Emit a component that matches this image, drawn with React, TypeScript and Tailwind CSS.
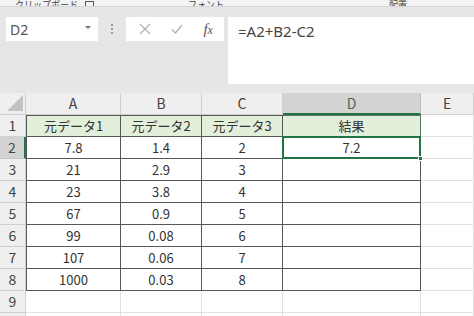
import { ReactNode } from "react";

const cols = ["A", "B", "C", "D", "E"];
const widths = "grid-cols-[26px_95px_81px_81px_138px_53px]";

const rows: string[][] = [
  ["元データ1", "元データ2", "元データ3", "結果"],
  ["7.8", "1.4", "2", "7.2"],
  ["21", "2.9", "3", ""],
  ["23", "3.8", "4", ""],
  ["67", "0.9", "5", ""],
  ["99", "0.08", "6", ""],
  ["107", "0.06", "7", ""],
  ["1000", "0.03", "8", ""],
];

const font = { fontFamily: '"Noto Sans CJK JP", "Noto Sans", sans-serif' };

const Cell = ({ className, children }: { className: string; children?: ReactNode }) => (
  <div className={"h-[22px] flex items-center justify-center text-[13px] text-[#333] " + className}>{children}</div>
);

export default function App() {
  return (
    <div className="w-[474px] h-[316px] overflow-hidden bg-white" style={font}>
      {/* ribbon group labels, cut off at the top */}
      <div className="h-[7px] overflow-hidden bg-[#f3f3f3] border-b border-[#d6d6d6] flex items-end text-[9px] text-[#444] leading-[10px]">
        <span className="ml-[15px] -mb-[4px]">クリップボード</span>
        <span className="ml-[7px] -mb-[4px] w-[9px] h-[9px] border border-[#555]" />
        <span className="ml-[94px] -mb-[4px]">フォント</span>
        <span className="ml-[165px] -mb-[4px]">配置</span>
      </div>

      {/* name box + formula bar */}
      <div className="h-[86px] bg-[#e6e6e6] flex items-start pt-[10px] pl-[6px]">
        <div className="w-[92px] h-[24px] bg-white flex items-center justify-between pl-[4px] pr-[7px]">
          <span className="text-[14px] text-[#555]" style={{ fontFamily: '"Noto Sans", sans-serif' }}>D2</span>
          <span className="w-0 h-0 border-l-[3px] border-r-[3px] border-t-[3px] border-l-transparent border-r-transparent border-t-[#777] -mt-[4px]" />
        </div>
        <div className="w-[28px] h-[24px] flex flex-col items-center justify-center gap-[2px]">
          <span className="w-[2px] h-[2px] bg-[#9a9a9a]" />
          <span className="w-[2px] h-[2px] bg-[#9a9a9a]" />
          <span className="w-[2px] h-[2px] bg-[#9a9a9a]" />
        </div>
        <div className="w-[98px] h-[24px] bg-white flex items-center justify-around px-[4px]">
          <svg width="12" height="12" viewBox="0 0 12 12" className="ml-[2px]">
            <path d="M1 1L11 11M11 1L1 11" stroke="#b0b0b0" strokeWidth="1.2" />
          </svg>
          <svg width="12" height="10" viewBox="0 0 12 10" className="ml-[6px]">
            <path d="M1 5.5L4.5 9L11 1" stroke="#b0b0b0" strokeWidth="1.3" fill="none" />
          </svg>
          <span className="italic text-[15px] text-[#555] ml-[6px]" style={{ fontFamily: '"Liberation Serif", serif' }}>
            f<span className="text-[12px]">x</span>
          </span>
        </div>
        <div className="ml-[4px] flex-1 h-[67px] bg-white pl-[10px] pt-[1px]">
          <span className="text-[15px] text-[#444]" style={{ fontFamily: '"Noto Sans", sans-serif' }}>=A2+B2-C2</span>
        </div>
      </div>

      {/* sheet */}
      <div className={"grid " + widths}>
        <div className="h-[22px] bg-[#efefef] border-r border-b border-[#d0d0d0] flex items-end justify-end pr-[2px] pb-[3px]">
          <svg width="16" height="16" viewBox="0 0 16 16">
            <path d="M16 0L16 16L0 16Z" fill="#c2c2c2" />
          </svg>
        </div>
        {cols.map((c) =>
          c === "D" ? (
            <div key={c} className="h-[22px] bg-[#d3d3d3] border-r border-[#bdbdbd] border-b-2 border-b-[#217346] flex items-center justify-center text-[14px] text-[#4a6b56]">
              {c}
            </div>
          ) : (
            <div key={c} className="h-[22px] bg-[#efefef] border-r border-b border-[#d0d0d0] flex items-center justify-center text-[14px] text-[#444]">
              {c}
            </div>
          )
        )}

        {Array.from({ length: 10 }, (_, i) => {
          const n = i + 1;
          const data = rows[i];
          const inTable = !!data;
          return [
            <div
              key={"h" + n}
              className={
                "h-[22px] flex items-center justify-center text-[14px] text-[#444] " +
                (n === 2
                  ? "bg-[#d3d3d3] border-b border-[#c4c4c4] border-r-2 border-r-[#217346]"
                  : "bg-[#efefef] border-r border-b border-[#d0d0d0]")
              }
            >
              {n}
            </div>,
            ...[0, 1, 2, 3].map((j) => {
              if (!inTable)
                return <Cell key={n + "-" + j} className="border-r border-b border-[#e1e1e1]" />;
              let cls = "border-r border-b border-[#585858]";
              if (j === 0) cls += " border-l";
              if (n === 1) cls += " bg-[#e2efda] border-t";
              if (n === 1 && j === 3) cls = "bg-[#e2efda] border-[#4f7a5e] border-r border-t border-b";
              if (n === 2 && j === 3)
                return (
                  <div key={n + "-" + j} className="relative h-[22px] flex items-center justify-center text-[13px] text-[#333] border-r border-b border-[#585858]">
                    {data[j]}
                    <div className="absolute -top-[1px] -left-[1px] -right-[1px] -bottom-[1px] border-2 border-[#217346]" />
                    <div className="absolute -right-[3px] -bottom-[3px] w-[5px] h-[5px] bg-[#217346] border border-white" />
                  </div>
                );
              return (
                <Cell key={n + "-" + j} className={cls}>
                  {data[j]}
                </Cell>
              );
            }),
            <Cell key={n + "-E"} className={"border-r border-b border-[#e1e1e1]"} />,
          ];
        })}
      </div>
    </div>
  );
}
